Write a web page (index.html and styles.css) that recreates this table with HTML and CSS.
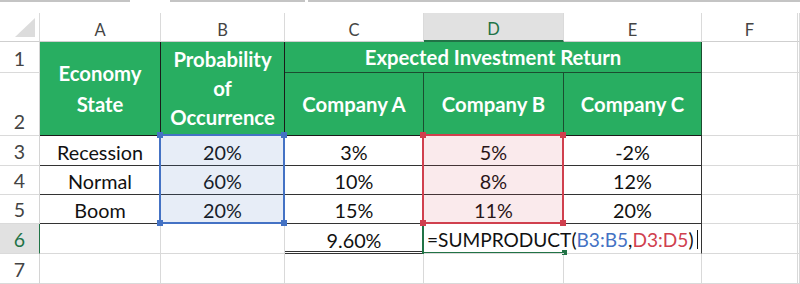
FILE: index.html
```html
<!DOCTYPE html>
<html>
<head>
<meta charset="utf-8">
<link rel="stylesheet" href="styles.css">
</head>
<body>
<div class="sheet">
  <div class="topbar y0"><span class="seg s1"></span><span class="gap g1"></span><span class="seg s2"></span><span class="gap g2"></span><span class="seg s3"></span></div>

  <div class="ch corner yh xr"><span class="tri"></span></div>
  <div class="ch yh xa">A</div>
  <div class="ch yh xb">B</div>
  <div class="ch yh xc">C</div>
  <div class="ch sel yh xd">D</div>
  <div class="ch yh xe">E</div>
  <div class="ch yh xf">F</div>
  <div class="ch yh xg"></div>

  <div class="rh y1 xr">1</div>
  <div class="grn m12 xa">Economy<br>State</div>
  <div class="grn m12 xb tight">Probability<br>of<br>Occurrence</div>
  <div class="grn y1 span3 inner">Expected Investment Return</div>
  <div class="cell y1 xf"></div>
  <div class="cell y1 xg"></div>

  <div class="rh y2 xr">2</div>
  <div class="grn y2 xc inner">Company A</div>
  <div class="grn y2 xd inner">Company B</div>
  <div class="grn y2 xe inner">Company C</div>
  <div class="cell y2 xf"></div>
  <div class="cell y2 xg"></div>

  <div class="rh y3 xr">3</div>
  <div class="cell dk y3 xa">Recession</div>
  <div class="cell dk y3 xb">20%</div>
  <div class="cell dk y3 xc">3%</div>
  <div class="cell dk y3 xd">5%</div>
  <div class="cell dk y3 xe">-2%</div>
  <div class="cell y3 xf"></div>
  <div class="cell y3 xg"></div>

  <div class="rh y4 xr">4</div>
  <div class="cell dk y4 xa">Normal</div>
  <div class="cell dk y4 xb">60%</div>
  <div class="cell dk y4 xc">10%</div>
  <div class="cell dk y4 xd">8%</div>
  <div class="cell dk y4 xe">12%</div>
  <div class="cell y4 xf"></div>
  <div class="cell y4 xg"></div>

  <div class="rh y5 xr">5</div>
  <div class="cell dk y5 xa">Boom</div>
  <div class="cell dk y5 xb">20%</div>
  <div class="cell dk y5 xc">15%</div>
  <div class="cell dk y5 xd">11%</div>
  <div class="cell dk y5 xe">20%</div>
  <div class="cell y5 xf"></div>
  <div class="cell y5 xg"></div>

  <div class="rh sel y6 xr">6</div>
  <div class="cell y6 xa"></div>
  <div class="cell y6 xb"></div>
  <div class="cell dbl y6 xc">9.60%</div>
  <div class="cell edit y6 xd"><span class="ftext">=SUMPRODUCT(<span class="rb">B3:B5</span>,<span class="rr">D3:D5</span>)</span><span class="caret"></span></div>
  <div class="cell rdk y6 xe"></div>
  <div class="cell y6 xf"></div>
  <div class="cell y6 xg"></div>

  <div class="rh y7 xr">7</div>
  <div class="cell y7 xa"></div>
  <div class="cell y7 xb"></div>
  <div class="cell y7 xc"></div>
  <div class="cell y7 xd"></div>
  <div class="cell y7 xe"></div>
  <div class="cell y7 xf"></div>
  <div class="cell y7 xg"></div>

  <div class="range blue">
    <span class="h tl"></span><span class="h tr"></span><span class="h bl"></span><span class="h br"></span>
  </div>
  <div class="range red">
    <span class="h tl"></span><span class="h tr"></span><span class="h bl"></span><span class="h br"></span>
  </div>
  <div class="active"><span class="gh"></span></div>
</div>
</body>
</html>
```
FILE: styles.css
```css
html, body {
  margin: 0;
  padding: 0;
  background: #fff;
}
.sheet {
  width: 800px;
  height: 284px;
  overflow: hidden;
  display: grid;
  grid-template-columns: 40px 121px 124px 139px 140px 138px 96px 2px;
  grid-template-rows: 13px 29px 31px 63px 30px 29px 29px 30px 30px;
  font-family: Lato, "Liberation Sans", sans-serif;
  color: #111;
}
.y0 { grid-row: 1; grid-column: 1 / -1; }
.yh { grid-row: 2; }
.y1 { grid-row: 3; }
.y2 { grid-row: 4; }
.y3 { grid-row: 5; }
.y4 { grid-row: 6; }
.y5 { grid-row: 7; }
.y6 { grid-row: 8; }
.y7 { grid-row: 9; }
.m12 { grid-row: 3 / 5; }
.xr { grid-column: 1; }
.xa { grid-column: 2; }
.xb { grid-column: 3; }
.xc { grid-column: 4; }
.xd { grid-column: 5; }
.xe { grid-column: 6; }
.xf { grid-column: 7; }
.xg { grid-column: 8; }
.span3 { grid-column: 4 / 7; }

.topbar {
  display: flex;
  align-items: flex-start;
}
.seg { height: 2px; background: #c4c4c4; }
.s1 { width: 130px; }
.g1 { width: 40px; }
.s2 { width: 135px; }
.g2 { width: 3px; }
.s3 { flex: 1; }

.ch {
  box-sizing: border-box;
  border-right: 1px solid #dadada;
  border-bottom: 1px solid #cfcfcf;
  display: flex;
  align-items: center;
  justify-content: center;
  padding-top: 5px;
  font-size: 16.5px;
  color: #444;
}
.ch.sel {
  background: #e1e1e1;
  color: #217346;
  border-bottom: 2px solid #217346;
}
.corner { position: relative; }
.tri {
  position: absolute;
  right: 4px;
  bottom: 4px;
  width: 0;
  height: 0;
  border-left: 20px solid transparent;
  border-bottom: 19px solid #dcdcdc;
}

.rh {
  box-sizing: border-box;
  border-right: 1px solid #d4d4d4;
  border-bottom: 1px solid #dadada;
  display: flex;
  align-items: flex-end;
  justify-content: center;
  padding-bottom: 3px;
  font-size: 19.5px;
  line-height: 20px;
  color: #444;
}
.rh.sel {
  background: #e1e1e1;
  color: #217346;
  border-right-color: #217346;
}

.cell {
  box-sizing: border-box;
  border-right: 1px solid #d9d9d9;
  border-bottom: 1px solid #d9d9d9;
  display: flex;
  align-items: flex-end;
  justify-content: center;
  padding-bottom: 3px;
  font-size: 19.8px;
  line-height: 20px;
  white-space: nowrap;
}
.cell.dk {
  border-right-color: #333;
  border-bottom-color: #333;
}
.cell.rdk { border-right-color: #333; }
.cell.dbl { border-bottom: 3px double #333; padding-bottom: 1px; }
.cell.edit {
  justify-content: flex-start;
  align-items: flex-end;
  padding-left: 3px;
  border-right: none;
  overflow: visible;
  position: relative;
  z-index: 3;
  font-size: 19.1px;
}
.ftext { flex: none; }
.rb { color: #4472c4; }
.rr { color: #d0404e; }
.caret {
  flex: none;
  display: block;
  width: 1px;
  height: 19px;
  margin-left: 3px;
  margin-bottom: 1px;
  background: #111;
}

.grn {
  box-sizing: border-box;
  background: #28ae61;
  color: #fff;
  font-weight: 700;
  font-size: 20.3px;
  line-height: 31px;
  text-align: center;
  display: flex;
  align-items: center;
  justify-content: center;
  border-right: 1px solid #1a1a1a;
  border-bottom: 1px solid #1a1a1a;
}
.grn.tight { line-height: 29px; }
.grn.inner {
  border-right-color: #1b4d30;
  border-bottom-color: #1b4d30;
}
.grn.y2 { border-bottom-color: #1a1a1a; }

.range {
  grid-row: 5 / 8;
  margin-left: -2px;
  margin-top: -2px;
  position: relative;
  z-index: 4;
}
.blue {
  grid-column: 3;
  border: 2px solid #4472c4;
  background: rgba(68, 114, 196, 0.13);
}
.red {
  grid-column: 5;
  border: 2px solid #d0404e;
  background: rgba(208, 64, 78, 0.11);
}
.h {
  position: absolute;
  width: 6px;
  height: 6px;
}
.blue .h { background: #4472c4; }
.red .h { background: #d0404e; }
.h.tl { left: -4px; top: -4px; }
.h.tr { right: -4px; top: -4px; }
.h.bl { left: -4px; bottom: -4px; }
.h.br { right: -4px; bottom: -4px; }

.active {
  grid-row: 8;
  grid-column: 5;
  margin-left: -2px;
  border-left: 2px solid #217346;
  border-bottom: 2px solid #217346;
  position: relative;
  z-index: 2;
}
.gh {
  position: absolute;
  right: -3px;
  bottom: -3px;
  width: 5px;
  height: 5px;
  background: #217346;
}
```
